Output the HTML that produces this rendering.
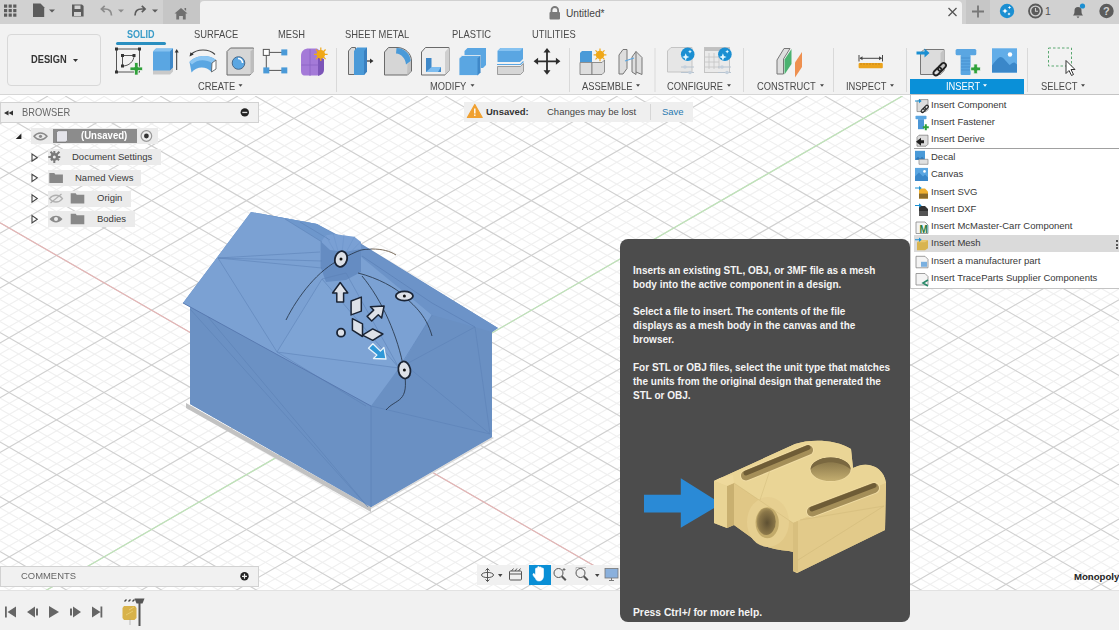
<!DOCTYPE html>
<html><head><meta charset="utf-8">
<style>
*{box-sizing:border-box;margin:0;padding:0}
html,body{width:1119px;height:630px;overflow:hidden;background:#fff;font-family:"Liberation Sans",sans-serif;color:#3c3c3c}
.a{position:absolute}
.t{position:absolute;white-space:nowrap;line-height:12px}
.grid{position:absolute;left:0;top:0}
#topbar{left:0;top:0;width:1119px;height:24px;background:#d1d1d1}
#hometab{left:163px;top:0;width:37px;height:24px;background:#c6c6c6}
#doctab{left:200px;top:1px;width:762px;height:23px;background:#f2f2f2;border-radius:4px 4px 0 0}
#plustab{left:966px;top:0;width:24px;height:24px;background:#c6c6c6}
#toolbar{left:0;top:24px;width:1119px;height:71px;background:#f2f2f2;border-bottom:1px solid #d6d6d6}
.tab{font-size:10.4px;color:#4a4a4a;top:29px;transform:scaleX(.9);transform-origin:0 50%}
.grp{font-size:10px;color:#4a4a4a;top:81px;transform:scaleX(.935);transform-origin:0 50%}
.sep{position:absolute;width:1px;background:#dcdcdc;top:48px;height:44px}
.panel{position:absolute;background:#f1f1f1;border:1px solid #d2d2d2}
.row{position:absolute;background:#ebebeb;height:16px}
.tree{font-size:9.5px;color:#383838}
.mi{position:absolute;left:931px;font-size:9.5px;color:#383838;white-space:nowrap;line-height:12px}
.tip{font-size:10px;font-weight:bold;color:#f4f4f4;left:633px;line-height:14px}
</style></head><body>
<svg class="grid" width="1119" height="630" viewBox="0 0 1119 630"><defs><filter id="gblur" x="0" y="0" width="1" height="1"><feGaussianBlur stdDeviation="0.45"/></filter></defs><g filter="url(#gblur)"><g stroke="#f0f0f0" stroke-width="1.2"><line x1="1090.7" y1="96.0" x2="1119.0" y2="112.4"/><line x1="1071.7" y1="96.0" x2="1119.0" y2="123.3"/><line x1="1052.7" y1="96.0" x2="1119.0" y2="134.3"/><line x1="1033.7" y1="96.0" x2="1119.0" y2="145.3"/><line x1="995.7" y1="96.0" x2="1119.0" y2="167.2"/><line x1="976.7" y1="96.0" x2="1119.0" y2="178.1"/><line x1="957.7" y1="96.0" x2="1119.0" y2="189.1"/><line x1="938.8" y1="96.0" x2="1119.0" y2="200.1"/><line x1="900.8" y1="96.0" x2="1119.0" y2="222.0"/><line x1="881.8" y1="96.0" x2="1119.0" y2="233.0"/><line x1="862.8" y1="96.0" x2="1119.0" y2="243.9"/><line x1="843.8" y1="96.0" x2="1119.0" y2="254.9"/><line x1="805.8" y1="96.0" x2="1119.0" y2="276.8"/><line x1="786.8" y1="96.0" x2="1119.0" y2="287.8"/><line x1="767.9" y1="96.0" x2="1119.0" y2="298.7"/><line x1="748.9" y1="96.0" x2="1119.0" y2="309.7"/><line x1="710.9" y1="96.0" x2="1119.0" y2="331.6"/><line x1="691.9" y1="96.0" x2="1119.0" y2="342.6"/><line x1="672.9" y1="96.0" x2="1119.0" y2="353.5"/><line x1="653.9" y1="96.0" x2="1119.0" y2="364.5"/><line x1="616.0" y1="96.0" x2="1119.0" y2="386.4"/><line x1="597.0" y1="96.0" x2="1119.0" y2="397.4"/><line x1="578.0" y1="96.0" x2="1119.0" y2="408.4"/><line x1="559.0" y1="96.0" x2="1119.0" y2="419.3"/><line x1="521.0" y1="96.0" x2="1119.0" y2="441.2"/><line x1="502.0" y1="96.0" x2="1119.0" y2="452.2"/><line x1="483.0" y1="96.0" x2="1119.0" y2="463.2"/><line x1="464.1" y1="96.0" x2="1119.0" y2="474.1"/><line x1="426.1" y1="96.0" x2="1119.0" y2="496.1"/><line x1="407.1" y1="96.0" x2="1119.0" y2="507.0"/><line x1="388.1" y1="96.0" x2="1119.0" y2="518.0"/><line x1="369.1" y1="96.0" x2="1119.0" y2="528.9"/><line x1="331.1" y1="96.0" x2="1119.0" y2="550.9"/><line x1="312.1" y1="96.0" x2="1119.0" y2="561.8"/><line x1="293.2" y1="96.0" x2="1119.0" y2="572.8"/><line x1="274.2" y1="96.0" x2="1119.0" y2="583.8"/><line x1="236.2" y1="96.0" x2="1093.6" y2="591.0"/><line x1="217.2" y1="96.0" x2="1074.6" y2="591.0"/><line x1="198.2" y1="96.0" x2="1055.6" y2="591.0"/><line x1="179.2" y1="96.0" x2="1036.6" y2="591.0"/><line x1="141.3" y1="96.0" x2="998.6" y2="591.0"/><line x1="122.3" y1="96.0" x2="979.6" y2="591.0"/><line x1="103.3" y1="96.0" x2="960.6" y2="591.0"/><line x1="84.3" y1="96.0" x2="941.7" y2="591.0"/><line x1="46.3" y1="96.0" x2="903.7" y2="591.0"/><line x1="27.3" y1="96.0" x2="884.7" y2="591.0"/><line x1="8.3" y1="96.0" x2="865.7" y2="591.0"/><line x1="0.0" y1="102.1" x2="846.7" y2="591.0"/><line x1="0.0" y1="124.1" x2="808.7" y2="591.0"/><line x1="0.0" y1="135.0" x2="789.8" y2="591.0"/><line x1="0.0" y1="146.0" x2="770.8" y2="591.0"/><line x1="0.0" y1="157.0" x2="751.8" y2="591.0"/><line x1="0.0" y1="178.9" x2="713.8" y2="591.0"/><line x1="0.0" y1="189.8" x2="694.8" y2="591.0"/><line x1="0.0" y1="200.8" x2="675.8" y2="591.0"/><line x1="0.0" y1="211.8" x2="656.8" y2="591.0"/><line x1="0.0" y1="233.7" x2="618.9" y2="591.0"/><line x1="0.0" y1="244.7" x2="599.9" y2="591.0"/><line x1="0.0" y1="255.6" x2="580.9" y2="591.0"/><line x1="0.0" y1="266.6" x2="561.9" y2="591.0"/><line x1="0.0" y1="288.5" x2="523.9" y2="591.0"/><line x1="0.0" y1="299.5" x2="504.9" y2="591.0"/><line x1="0.0" y1="310.4" x2="485.9" y2="591.0"/><line x1="0.0" y1="321.4" x2="467.0" y2="591.0"/><line x1="0.0" y1="343.3" x2="429.0" y2="591.0"/><line x1="0.0" y1="354.3" x2="410.0" y2="591.0"/><line x1="0.0" y1="365.3" x2="391.0" y2="591.0"/><line x1="0.0" y1="376.2" x2="372.0" y2="591.0"/><line x1="0.0" y1="398.1" x2="334.0" y2="591.0"/><line x1="0.0" y1="409.1" x2="315.1" y2="591.0"/><line x1="0.0" y1="420.1" x2="296.1" y2="591.0"/><line x1="0.0" y1="431.0" x2="277.1" y2="591.0"/><line x1="0.0" y1="453.0" x2="239.1" y2="591.0"/><line x1="0.0" y1="463.9" x2="220.1" y2="591.0"/><line x1="0.0" y1="474.9" x2="201.1" y2="591.0"/><line x1="0.0" y1="485.8" x2="182.1" y2="591.0"/><line x1="0.0" y1="507.8" x2="144.2" y2="591.0"/><line x1="0.0" y1="518.7" x2="125.2" y2="591.0"/><line x1="0.0" y1="529.7" x2="106.2" y2="591.0"/><line x1="0.0" y1="540.7" x2="87.2" y2="591.0"/><line x1="0.0" y1="562.6" x2="49.2" y2="591.0"/><line x1="0.0" y1="573.5" x2="30.2" y2="591.0"/><line x1="0.0" y1="584.5" x2="11.2" y2="591.0"/><line x1="0.0" y1="101.7" x2="9.9" y2="96.0"/><line x1="0.0" y1="112.7" x2="28.9" y2="96.0"/><line x1="0.0" y1="134.6" x2="66.9" y2="96.0"/><line x1="0.0" y1="145.6" x2="85.9" y2="96.0"/><line x1="0.0" y1="156.6" x2="104.9" y2="96.0"/><line x1="0.0" y1="167.5" x2="123.9" y2="96.0"/><line x1="0.0" y1="189.4" x2="161.8" y2="96.0"/><line x1="0.0" y1="200.4" x2="180.8" y2="96.0"/><line x1="0.0" y1="211.4" x2="199.8" y2="96.0"/><line x1="0.0" y1="222.3" x2="218.8" y2="96.0"/><line x1="0.0" y1="244.3" x2="256.8" y2="96.0"/><line x1="0.0" y1="255.2" x2="275.8" y2="96.0"/><line x1="0.0" y1="266.2" x2="294.8" y2="96.0"/><line x1="0.0" y1="277.1" x2="313.7" y2="96.0"/><line x1="0.0" y1="299.1" x2="351.7" y2="96.0"/><line x1="0.0" y1="310.0" x2="370.7" y2="96.0"/><line x1="0.0" y1="321.0" x2="389.7" y2="96.0"/><line x1="0.0" y1="332.0" x2="408.7" y2="96.0"/><line x1="0.0" y1="353.9" x2="446.7" y2="96.0"/><line x1="0.0" y1="364.8" x2="465.7" y2="96.0"/><line x1="0.0" y1="375.8" x2="484.6" y2="96.0"/><line x1="0.0" y1="386.8" x2="503.6" y2="96.0"/><line x1="0.0" y1="408.7" x2="541.6" y2="96.0"/><line x1="0.0" y1="419.7" x2="560.6" y2="96.0"/><line x1="0.0" y1="430.6" x2="579.6" y2="96.0"/><line x1="0.0" y1="441.6" x2="598.6" y2="96.0"/><line x1="0.0" y1="463.5" x2="636.5" y2="96.0"/><line x1="0.0" y1="474.5" x2="655.5" y2="96.0"/><line x1="0.0" y1="485.4" x2="674.5" y2="96.0"/><line x1="0.0" y1="496.4" x2="693.5" y2="96.0"/><line x1="0.0" y1="518.3" x2="731.5" y2="96.0"/><line x1="0.0" y1="529.3" x2="750.5" y2="96.0"/><line x1="0.0" y1="540.2" x2="769.5" y2="96.0"/><line x1="0.0" y1="551.2" x2="788.4" y2="96.0"/><line x1="0.0" y1="573.1" x2="826.4" y2="96.0"/><line x1="0.0" y1="584.1" x2="845.4" y2="96.0"/><line x1="7.0" y1="591.0" x2="864.4" y2="96.0"/><line x1="26.0" y1="591.0" x2="883.4" y2="96.0"/><line x1="64.0" y1="591.0" x2="921.4" y2="96.0"/><line x1="83.0" y1="591.0" x2="940.4" y2="96.0"/><line x1="102.0" y1="591.0" x2="959.3" y2="96.0"/><line x1="121.0" y1="591.0" x2="978.3" y2="96.0"/><line x1="158.9" y1="591.0" x2="1016.3" y2="96.0"/><line x1="177.9" y1="591.0" x2="1035.3" y2="96.0"/><line x1="196.9" y1="591.0" x2="1054.3" y2="96.0"/><line x1="215.9" y1="591.0" x2="1073.3" y2="96.0"/><line x1="253.9" y1="591.0" x2="1111.2" y2="96.0"/><line x1="272.9" y1="591.0" x2="1119.0" y2="102.5"/><line x1="291.9" y1="591.0" x2="1119.0" y2="113.4"/><line x1="310.8" y1="591.0" x2="1119.0" y2="124.4"/><line x1="348.8" y1="591.0" x2="1119.0" y2="146.3"/><line x1="367.8" y1="591.0" x2="1119.0" y2="157.3"/><line x1="386.8" y1="591.0" x2="1119.0" y2="168.3"/><line x1="405.8" y1="591.0" x2="1119.0" y2="179.2"/><line x1="443.8" y1="591.0" x2="1119.0" y2="201.1"/><line x1="462.7" y1="591.0" x2="1119.0" y2="212.1"/><line x1="481.7" y1="591.0" x2="1119.0" y2="223.1"/><line x1="500.7" y1="591.0" x2="1119.0" y2="234.0"/><line x1="538.7" y1="591.0" x2="1119.0" y2="256.0"/><line x1="557.7" y1="591.0" x2="1119.0" y2="266.9"/><line x1="576.7" y1="591.0" x2="1119.0" y2="277.9"/><line x1="595.7" y1="591.0" x2="1119.0" y2="288.9"/><line x1="633.6" y1="591.0" x2="1119.0" y2="310.8"/><line x1="652.6" y1="591.0" x2="1119.0" y2="321.7"/><line x1="671.6" y1="591.0" x2="1119.0" y2="332.7"/><line x1="690.6" y1="591.0" x2="1119.0" y2="343.7"/><line x1="728.6" y1="591.0" x2="1119.0" y2="365.6"/><line x1="747.6" y1="591.0" x2="1119.0" y2="376.6"/><line x1="766.6" y1="591.0" x2="1119.0" y2="387.5"/><line x1="785.5" y1="591.0" x2="1119.0" y2="398.5"/><line x1="823.5" y1="591.0" x2="1119.0" y2="420.4"/><line x1="842.5" y1="591.0" x2="1119.0" y2="431.4"/><line x1="861.5" y1="591.0" x2="1119.0" y2="442.3"/><line x1="880.5" y1="591.0" x2="1119.0" y2="453.3"/><line x1="918.5" y1="591.0" x2="1119.0" y2="475.2"/><line x1="937.4" y1="591.0" x2="1119.0" y2="486.2"/><line x1="956.4" y1="591.0" x2="1119.0" y2="497.1"/><line x1="975.4" y1="591.0" x2="1119.0" y2="508.1"/><line x1="1013.4" y1="591.0" x2="1119.0" y2="530.0"/><line x1="1032.4" y1="591.0" x2="1119.0" y2="541.0"/><line x1="1051.4" y1="591.0" x2="1119.0" y2="552.0"/><line x1="1070.4" y1="591.0" x2="1119.0" y2="562.9"/><line x1="1108.3" y1="591.0" x2="1119.0" y2="584.8"/></g><g stroke="#d0d0d0" stroke-width="1.15"><line x1="1109.6" y1="96.0" x2="1119.0" y2="101.4"/><line x1="1014.7" y1="96.0" x2="1119.0" y2="156.2"/><line x1="919.8" y1="96.0" x2="1119.0" y2="211.0"/><line x1="824.8" y1="96.0" x2="1119.0" y2="265.8"/><line x1="729.9" y1="96.0" x2="1119.0" y2="320.7"/><line x1="634.9" y1="96.0" x2="1119.0" y2="375.5"/><line x1="540.0" y1="96.0" x2="1119.0" y2="430.3"/><line x1="445.1" y1="96.0" x2="1119.0" y2="485.1"/><line x1="350.1" y1="96.0" x2="1119.0" y2="539.9"/><line x1="255.2" y1="96.0" x2="1112.6" y2="591.0"/><line x1="160.2" y1="96.0" x2="1017.6" y2="591.0"/><line x1="65.3" y1="96.0" x2="922.7" y2="591.0"/><line x1="0.0" y1="113.1" x2="827.7" y2="591.0"/><line x1="0.0" y1="167.9" x2="732.8" y2="591.0"/><line x1="0.0" y1="222.7" x2="637.9" y2="591.0"/><line x1="0.0" y1="277.6" x2="542.9" y2="591.0"/><line x1="0.0" y1="332.4" x2="448.0" y2="591.0"/><line x1="0.0" y1="387.2" x2="353.0" y2="591.0"/><line x1="0.0" y1="442.0" x2="258.1" y2="591.0"/><line x1="0.0" y1="496.8" x2="163.2" y2="591.0"/><line x1="0.0" y1="551.6" x2="68.2" y2="591.0"/><line x1="0.0" y1="123.7" x2="47.9" y2="96.0"/><line x1="0.0" y1="178.5" x2="142.9" y2="96.0"/><line x1="0.0" y1="233.3" x2="237.8" y2="96.0"/><line x1="0.0" y1="288.1" x2="332.7" y2="96.0"/><line x1="0.0" y1="342.9" x2="427.7" y2="96.0"/><line x1="0.0" y1="397.7" x2="522.6" y2="96.0"/><line x1="0.0" y1="452.5" x2="617.6" y2="96.0"/><line x1="0.0" y1="507.4" x2="712.5" y2="96.0"/><line x1="0.0" y1="562.2" x2="807.4" y2="96.0"/><line x1="45.0" y1="591.0" x2="902.4" y2="96.0"/><line x1="139.9" y1="591.0" x2="997.3" y2="96.0"/><line x1="234.9" y1="591.0" x2="1092.3" y2="96.0"/><line x1="329.8" y1="591.0" x2="1119.0" y2="135.4"/><line x1="424.8" y1="591.0" x2="1119.0" y2="190.2"/><line x1="519.7" y1="591.0" x2="1119.0" y2="245.0"/><line x1="614.6" y1="591.0" x2="1119.0" y2="299.8"/><line x1="709.6" y1="591.0" x2="1119.0" y2="354.6"/><line x1="804.5" y1="591.0" x2="1119.0" y2="409.4"/><line x1="899.5" y1="591.0" x2="1119.0" y2="464.3"/><line x1="994.4" y1="591.0" x2="1119.0" y2="519.1"/><line x1="1089.3" y1="591.0" x2="1119.0" y2="573.9"/></g><line x1="0.0" y1="222.7" x2="637.9" y2="591.0" stroke="#e6b4b4" stroke-width="1.15"/><line x1="45.0" y1="591.0" x2="902.4" y2="96.0" stroke="#bfe4b8" stroke-width="1.2"/></g></svg>
<svg class="a" style="left:170px;top:200px" width="340" height="320" viewBox="170 200 340 320">
<!-- shadow -->
<path d="M186 403l185 104 0 5-185-104z" fill="#c2c2c2"/><path d="M371 507l121-70 2 1-123 71z" fill="#d8d8d8"/>
<path d="M251 212L183 303L190 307L190 404L371 507L492 437L492 332L498 328L360 243L336 234L317 224Z" fill="#6a90c4"/>
<!-- left wall -->
<path d="M190 306L190 404L371 507L371 405Z" fill="#6b91c4"/>
<!-- right wall / gable -->
<path d="M371 405L371 507L492 437L492 331L432 315L404 361Z" fill="#6a90c3"/>
<!-- roof front -->
<path d="M251 212L183 303L371 406L404 361L432 315L360 252L322 242L317 224Z" fill="#7ba1d3"/>
<!-- ridge band right -->
<path d="M358 243L498 328L492 332L432 315L360 256Z" fill="#6c93c8"/>
<path d="M362 256L432 303L475 327" stroke="#5a80b6" stroke-width=".9" fill="none" opacity=".8"/>
<!-- back ridge -->
<path d="M251 212L317 224L334 234L322 242L285 219Z" fill="#6e97cc"/>
<!-- dome -->
<path d="M320.6 241.7L320.6 267L326 282L346 280L361 272L361 249L360.6 241.7Z" fill="#658cc2"/>
<path d="M321.1 241.7L325.6 235.6L333.3 233.9L354.4 236.7L360.6 241.7L361.1 248.9L345 252L330 250Z" fill="#7aa0d4"/>
<g stroke="#6a92c8" stroke-width=".6" opacity=".8"><path d="M341 262L325.6 235.6M341 262L333.3 233.9M341 262L344 234.5M341 262L354.4 236.7M341 262L360.6 241.7"/></g>
<!-- lighter central triangle -->
<path d="M277 352L322 279L399 368Z" fill="#7ea4d5"/>
<!-- mesh lines -->
<g stroke="#5a7fb5" stroke-width=".7" fill="none" opacity=".75">
<path d="M218 258L277 352L366 406"/>
<path d="M218 258L322 261M218 258L322 268M218 258L320 252"/>
<path d="M277 352L322 279L399 368L277 352"/>
<path d="M322 279L346 273L399 368"/>
<path d="M371 406L490 434M409 368L490 434M475 327L490 434"/>
<path d="M190 309L368 507M208 317L368 507"/>
<path d="M399 368L475 327M399 368L432 315"/>
<path d="M285 219L322 242M300 222L330 240"/>
<path d="M183 303L371 406" stroke="#5070a8" stroke-width="1"/>
<path d="M371 406V507" stroke="#5a80b5" stroke-width=".9"/>
</g>
<!-- arcs -->
<g stroke="#1e2a3a" stroke-width=".9" fill="none" opacity=".85">
<path d="M286 320C298 296 318 270 341 259S360 250 372 249"/>
<path d="M358 273C378 278 396 288 404 296S426 314 432 336"/>
<path d="M362 276C382 300 398 336 404 370S396 398 386 410"/>
</g>
<path d="M372 249C382 249 390 251 396 255" stroke="#6a5a48" stroke-width=".9" fill="none"/>
<!-- handles -->
<g stroke="#1a2435" stroke-width="1.8" fill="#dde1e8">
<ellipse cx="341" cy="259" rx="6" ry="8" transform="rotate(15 341 259)"/>
<ellipse cx="404.4" cy="296" rx="8.6" ry="4.6"/>
<ellipse cx="404.4" cy="370" rx="6" ry="8.6" transform="rotate(-10 404.4 370)"/>
<circle cx="341" cy="332.7" r="4"/>
</g>
<g fill="#111"><circle cx="341" cy="259" r="1.5"/><circle cx="404.4" cy="296" r="1.5"/><circle cx="404.4" cy="370" r="1.5"/></g>
<g stroke="#1a2435" stroke-width="1.5" fill="#dde1e8" stroke-linejoin="round">
<path d="M340.2 282.5l7.6 10.5h-4.2v9h-6.8v-9h-4.2z"/>
<path d="M351.1 301l10.2-3.9v14l-10.2 3.8z"/>
<path d="M352.4 318.7l10.1 5.1v12.7l-10.1-6.3z"/>
<path d="M362.5 335.2l10.2-6.3 10.2 5.1-10.2 6.3z"/>
<path d="M384.1 306l-2.5 12-3.3-3.3-6.6 6.3-4.6-4.6 6.6-6.3-3.3-3.3z"/>
</g>
<path d="M386 359l-12.5-.5 3.4-3.4-8.4-6.8 4.4-4.6 7.5 7.4 3.5-3.6z" fill="#2f98d8" stroke="#e8f4fc" stroke-width="1.3" stroke-linejoin="round"/>
</svg>

<!-- top bar -->
<div class="a" id="topbar"></div>
<div class="a" id="hometab"></div>
<div class="a" id="doctab"></div>
<div class="a" id="plustab"></div>

<svg class="a" style="left:0;top:0" width="1119" height="24" viewBox="0 0 1119 24">
<g fill="#5c5c5c">
<rect x="4" y="4.5" width="3.2" height="3.2"/><rect x="8.6" y="4.5" width="3.2" height="3.2"/><rect x="13.2" y="4.5" width="3.2" height="3.2"/>
<rect x="4" y="9" width="3.2" height="3.2"/><rect x="8.6" y="9" width="3.2" height="3.2"/><rect x="13.2" y="9" width="3.2" height="3.2"/>
<rect x="4" y="13.5" width="3.2" height="3.2"/><rect x="8.6" y="13.5" width="3.2" height="3.2"/><rect x="13.2" y="13.5" width="3.2" height="3.2"/>
<path d="M33 3.6h7.5l3.7 3.7v9.7H33z"/>
<path d="M49 9.5h6l-3 3z"/>
<path d="M72 4.5h10l1.6 1.6v10.4H72z M74.5 5.5v3.5h6v-3.5z M74 12v4h7v-4z" fill-rule="evenodd"/>
<path d="M152 9.5h6l-3 3z"/>
<path d="M135 15.5c0-4 2.5-6.5 6.5-6.5h3.5M141.8 5.8l3.3 3.2-3.3 3.2" fill="none" stroke="#5c5c5c" stroke-width="1.7"/>
<path d="M181 8l6.5 5.5h-1.8v6h-2.8v-3.5h-3.8v3.5h-2.8v-6h-1.8z M184.5 9.5v-1.5h1.6v3z" fill="#707070"/>
<rect x="549.5" y="12" width="10.5" height="7.5" rx="1" fill="#7a7a7a"/>
<path d="M551.5 12.5v-2.2a3.3 3.3 0 0 1 6.6 0v2.2" fill="none" stroke="#7a7a7a" stroke-width="1.8"/>
<path d="M948.5 8l8 8M956.5 8l-8 8" stroke="#555" stroke-width="1.3" fill="none"/>
<path d="M978 5.5v12M972 11.5h12" stroke="#777" stroke-width="1.8" fill="none"/>
<circle cx="1007" cy="11" r="7.2" fill="#1b8fd2"/>
<path d="M1005 8.5l1 1.8 1.8.7-1.8.7-1 1.8-1-1.8-1.8-.7 1.8-.7z M1009.5 6l.6 1.1 1.1.4-1.1.4-.6 1.1-.6-1.1-1.1-.4 1.1-.4z M1009 12.5l.6 1 1 .5-1 .5-.6 1-.6-1-1-.5 1-.5z" fill="#fff"/>
<circle cx="1035.5" cy="11" r="6.5" fill="none" stroke="#5a5a5a" stroke-width="1.8"/>
<circle cx="1035.5" cy="11" r="4.2" fill="#5a5a5a"/>
<path d="M1035.5 8v3.3h2.5" stroke="#d1d1d1" stroke-width="1.1" fill="none"/>
<path d="M1073 15.5c1.5-1.5 1.5-3 1.5-5a3.5 3.5 0 0 1 7 0c0 2 0 3.5 1.5 5z M1076.5 16.5h3l-1.5 1.7z"/>
<circle cx="1082.5" cy="6" r="2.6" fill="#1b8fd2"/>
<circle cx="1106.5" cy="11" r="7.2"/>
</g>
<path d="M111.5 15.5c0-4-2.5-6.5-6.5-6.5h-3.5M104.7 5.8l-3.3 3.2 3.3 3.2" fill="none" stroke="#8c8c8c" stroke-width="1.7"/>
<path d="M118 9.5h6l-3 3z" fill="#8c8c8c"/>
<text x="1045" y="15" font-size="10.5" fill="#555" font-family="Liberation Sans">1</text>
<text x="1103" y="15.2" font-size="11" font-weight="bold" fill="#d1d1d1" font-family="Liberation Sans">?</text>
</svg>
<div class="t" style="left:566px;top:8px;font-size:10.2px;color:#444">Untitled*</div>
<!-- toolbar -->
<div class="a" id="toolbar"></div>
<div class="a" style="left:7px;top:34px;width:94px;height:52px;border:1px solid #d8d8d8;border-radius:4px;background:#f2f2f2"></div>
<div class="t" style="left:31px;top:54px;font-size:10px;font-weight:bold;color:#333;transform:scaleX(.93);transform-origin:0 50%">DESIGN</div>
<svg class="a" style="left:0;top:24px" width="1119" height="71" viewBox="0 24 1119 71">
<defs>
<linearGradient id="gb" x1="0" y1="0" x2="0" y2="1"><stop offset="0" stop-color="#6bb4ec"/><stop offset="1" stop-color="#4a97d8"/></linearGradient>
</defs>
<!-- DESIGN arrow -->
<path d="M73 59h5l-2.5 3z" fill="#333"/>
<!-- sketch -->
<g fill="none" stroke="#555" stroke-width="1">
<rect x="116.5" y="49" width="23" height="23"/>
<path d="M122.5 55.5h11.5M122.5 55.5v10.5M134 55.5c0 6-5 10.5-11.5 10.5"/>
</g>
<g fill="#333"><rect x="115" y="47.5" width="3" height="3"/><rect x="138" y="47.5" width="3" height="3"/><rect x="115" y="70.5" width="3" height="3"/>
<rect x="121" y="54" width="3" height="3"/><rect x="132.5" y="54" width="3" height="3"/><rect x="121" y="64.5" width="3" height="3"/></g>
<path d="M134.5 62.5h3.6v4.5h4.5v3.6h-4.5v4.5h-3.6v-4.5H130v-3.6h4.5z" fill="#2fa13a" stroke="#f2f2f2" stroke-width=".8"/>
<!-- extrude -->
<path d="M153 51.5l3-3h17v19.5l-3 3H153z" fill="#5aa6e2"/>
<path d="M153 51.5l3-3h17l-3 3z" fill="#86c2f0"/>
<path d="M170 51.5l3-3v19.5l-3 3z" fill="#3f88c8"/>
<path d="M153 70.5h17l3-3v4l-3 3H153z" fill="#c9c9c9"/>
<path d="M176.7 70V50.5" stroke="#333" stroke-width="1"/>
<path d="M174.7 52.5l2-3.5 2 3.5z" fill="#333"/>
<!-- revolve -->
<path d="M191 54.5c6-6 18-6 24 0" fill="none" stroke="#444" stroke-width="1.1"/>
<path d="M189.5 56.5l1-4.2 3.2 2.2z" fill="#333"/>
<path d="M189.5 62C196 55 209 54 216 60L216 69L211.5 72C206 66 197 66 191.5 72.5Z" fill="#5aa6e2"/>
<path d="M189.5 62C196 55 209 54 216 60L212 63C206 59 197 59 192 64.5Z" fill="#8cc6f2"/>
<path d="M212 63L216 60V69L211.5 72Z" fill="#fff" stroke="#555" stroke-width=".8"/>
<!-- hole -->
<path d="M227 51.5l3.5-3.5h23v23.5l-3.5 3.5H227z" fill="#d6d6d6" stroke="#6a6a6a" stroke-width="1"/>
<path d="M250.5 51.5l3.5-3.5v23.5l-3.5 3.5z" fill="#bdbdbd"/>
<circle cx="238.5" cy="63" r="6.3" fill="#5aa6e2" stroke="#4a6a8a" stroke-width="1"/>
<path d="M238 58.5a4.5 4.5 0 0 1 4.6 4.4" stroke="#fff" stroke-width="1.6" fill="none"/>
<!-- pattern -->
<path d="M266.3 52.4h18M266.3 52.4v18M266.3 70.4h18" stroke="#555" stroke-width="1"/>
<rect x="263.3" y="49.4" width="6" height="6" fill="#fff" stroke="#555" stroke-width="1"/>
<rect x="281.3" y="49.4" width="6" height="6" fill="#4a9ad8"/>
<rect x="263.3" y="67.4" width="6" height="6" fill="#4a9ad8"/>
<rect x="281.3" y="67.4" width="6" height="6" fill="#4a9ad8"/>
<!-- form -->
<path d="M301 56c0-5 3-7.5 8-7.5h8l5 4v17c0 4-3 6-6 6h-11c-3 0-4-2-4-5z" fill="#a47ad8"/>
<path d="M318 56l6 3v11c0 3-2 5-6 6z" fill="#7c55b8"/>
<path d="M301.5 65h17M310 49v27" stroke="#8a62c4" stroke-width=".8"/>
<circle cx="320.8" cy="54.3" r="4.3" fill="#f0a818"/>
<g stroke="#f0a818" stroke-width="1.2"><path d="M320.8 47.5v13.6M314 54.3h13.6M316 49.5l9.6 9.6M325.6 49.5l-9.6 9.6"/></g>
<!-- separators -->
<g fill="#d9d9d9"><rect x="336" y="48" width="1" height="44"/><rect x="569" y="48" width="1" height="44"/><rect x="654.5" y="48" width="1" height="44"/><rect x="743" y="48" width="1" height="44"/><rect x="833" y="48" width="1" height="44"/><rect x="906" y="48" width="1" height="44"/><rect x="1027" y="48" width="1" height="44"/></g>
<!-- press pull -->
<path d="M348.5 51l3-3.5h4v27h-7z" fill="#dcdcdc" stroke="#6a6a6a" stroke-width="1"/>
<path d="M354 51l3-3.5h10v24l-3 3.5H354z" fill="#4a9ad8"/>
<path d="M364 51l3-3.5v24l-3 3.5z" fill="#3a80c0"/>
<path d="M367 61h3.5" stroke="#333" stroke-width="1.2"/><path d="M370 58.5l3.5 2.5-3.5 2.5z" fill="#333"/>
<!-- fillet -->
<path d="M384.5 52l4-4.5h8.5c8 0 14.5 6 14.5 13.5v10l-4 4h-23z" fill="#d6d6d6" stroke="#6a6a6a" stroke-width="1"/>
<path d="M407.5 64l3.5-3v10l-4 4z" fill="#c2c2c2"/>
<path d="M396.5 48c8 0 14 6 14.2 13l-4.7 3.5c-.5-6-4.5-10.5-10-11z" fill="#4a9ad8"/>
<!-- shell -->
<path d="M421.5 52l4-4.5h23.5v23l-4 4.5h-23.5z" fill="#eeeeee" stroke="#6a6a6a" stroke-width="1"/>
<path d="M445 52l4-4.5v23l-4 4.5z" fill="#cfcfcf"/>
<path d="M426 58h5.5v9h9.5v5H426z" fill="#3f88c8"/><path d="M431.5 67h9.5l-3 5H426z" fill="#7dbdf0"/>
<!-- combine -->
<path d="M464.5 51l3-3h18.5v17l-3 3h-18.5z" fill="#5aa6e2"/>
<path d="M459 58.5l3-3h18.5v17l-3 3H459z" fill="#5aa6e2" stroke="#f2f2f2" stroke-width=".8"/>
<path d="M477.5 58.5l3-3v17l-3 3z" fill="#3f88c8"/>
<!-- split -->
<path d="M497.5 51l3-3h22.5v11l-3 3h-22.5z" fill="#5aa6e2"/>
<path d="M497.5 51l3-3h22.5l-3 3z" fill="#86c2f0"/>
<path d="M497 64.5h23.5l3-3" stroke="#5aa6e2" stroke-width="1.2" fill="none"/>
<path d="M497.5 66.5h23l3-3v8l-3 3h-23z" fill="#d6d6d6" stroke="#8a8a8a" stroke-width=".8"/>
<!-- move -->
<g stroke="#2d2d2d" stroke-width="1.8"><path d="M547 51v21M536.5 61.3h21"/></g>
<g fill="#2d2d2d"><path d="M547 47.9l3.5 4.5h-7z M547 74.7l3.5-4.5h-7z M533.6 61.3l4.5-3.5v7z M560.4 61.3l-4.5-3.5v7z"/></g>
<!-- new component -->
<path d="M580 53l2-2h10v11h-12z" fill="#4a9ad8"/>
<path d="M580 62.5h12v12h-12z" fill="#dedede" stroke="#777" stroke-width=".8"/>
<path d="M592 62.5h10l2.5-2.5v12l-2.5 2.5h-10z" fill="#dedede" stroke="#777" stroke-width=".8"/>
<circle cx="600" cy="54.9" r="4.2" fill="#f0a818"/>
<g stroke="#f0a818" stroke-width="1.2"><path d="M600 48.5v12.8M593.6 54.9h12.8M595.5 50.4l9 9M604.5 50.4l-9 9"/></g>
<!-- joint -->
<path d="M619 55l4-5.5h4v19l-4 5.5h-4z" fill="#dedede" stroke="#777" stroke-width="1"/>
<path d="M632 57l4-5.5v23l-4-2.5z M636 51.5l6 6v17l-6-2.5" fill="#dedede" stroke="#777" stroke-width="1"/>
<path d="M625 61l9-3" stroke="#5aa6e2" stroke-width="1.2"/>
<!-- configure 1 -->
<path d="M667.5 51l3.5-3.5h21v24.5h-24.5z" fill="#e6e6e6" stroke="#c4c4c4" stroke-width="1"/>
<path d="M681 67h13M681 72.5h13" stroke="#b8c4d0" stroke-width="1.2"/><circle cx="685" cy="67" r="1.8" fill="#c4d0dc"/><circle cx="690" cy="72.5" r="1.8" fill="#c4d0dc"/>
<circle cx="687.7" cy="54.3" r="6.8" fill="#1b8fd2"/>
<path d="M685.7 53.3l1.1 2.6 2.6 1.1-2.6 1.1-1.1 2.6-1.1-2.6-2.6-1.1 2.6-1.1z M690 49.8l.6 1.3 1.3.6-1.3.6-.6 1.3-.6-1.3-1.3-.6 1.3-.6z" fill="#e0f6ff"/>
<!-- configure 2 -->
<rect x="704.5" y="47.5" width="25" height="25" fill="#eaeaea" stroke="#c4c4c4" stroke-width="1"/>
<rect x="704.5" y="47.5" width="25" height="3.5" fill="#c0c0c0"/>
<path d="M709 53v16M714 53v16M719 53v16M705 57h14M705 62h14M705 67h14" stroke="#c4c4c4" stroke-width=".8"/>
<path d="M718 67h13M718 72.5h13" stroke="#b8c4d0" stroke-width="1.2"/><circle cx="722" cy="67" r="1.8" fill="#c4d0dc"/><circle cx="727" cy="72.5" r="1.8" fill="#c4d0dc"/>
<circle cx="724.9" cy="54.3" r="6.8" fill="#1b8fd2"/>
<path d="M722.9 53.3l1.1 2.6 2.6 1.1-2.6 1.1-1.1 2.6-1.1-2.6-2.6-1.1 2.6-1.1z M727.2 49.8l.6 1.3 1.3.6-1.3.6-.6 1.3-.6-1.3-1.3-.6 1.3-.6z" fill="#e0f6ff"/>
<!-- construct -->
<path d="M777 60l7-11.5h6l-6.5 10.5v15h-6.5z" fill="#dedede" stroke="#777" stroke-width="1"/>
<path d="M784.5 59.5l7-10.5v15l-7 10.5z" fill="#4bb270"/>
<path d="M795 62.5l7-10.5v15l-7 10.5z" fill="#ee9050"/>
<!-- inspect -->
<path d="M859 55v6.5M882.5 55v6.5M860 58.3h21.5" stroke="#444" stroke-width="1"/>
<path d="M859.5 58.3l3-2v4z M882 58.3l-3-2v4z" fill="#444"/>
<rect x="858.6" y="63" width="24.2" height="5.3" rx="1" fill="#eba31c"/>
<path d="M861 63v2M864 63v2M867 63v2M870 63v2M873 63v2M876 63v2M879 63v2" stroke="#b87a10" stroke-width=".6"/>
<!-- insert derive -->
<path d="M920.5 53l3.5-3.5h20v21.5l-3.5 3.5h-20z" fill="#dcdcdc" stroke="#777" stroke-width="1"/>
<path d="M940.5 53l3.5-3.5v21.5l-3.5 3.5z" fill="#c4c4c4"/>
<path d="M916.5 51.5h8v-3l5 4.5-5 4.5v-3h-8z" fill="#1b8fd2"/>
<g fill="none" stroke="#222" stroke-width="1.8"><path d="M934 71.5l3.5-3.5a2.5 2.5 0 0 1 3.5 3.5l-3.5 3.5a2.5 2.5 0 0 1-3.5-3.5z"/><path d="M938.5 67l3.5-3.5a2.5 2.5 0 0 1 3.5 3.5l-3.5 3.5a2.5 2.5 0 0 1-3.5-3.5z"/></g>
<!-- fastener -->
<rect x="955.6" y="49" width="20.7" height="6.3" rx="1.5" fill="#5aa6e2"/>
<rect x="960.6" y="55" width="10" height="20" rx="1" fill="#5aa6e2"/>
<path d="M961 58h9M961 61h9M961 64h9M961 67h9M961 70h9" stroke="#3f88c8" stroke-width=".7"/>
<path d="M973.8 64h3.6v3.1h3.1v3.6h-3.1v3.1h-3.6v-3.1h-3.1v-3.6h3.1z" fill="#2fa13a" stroke="#f2f2f2" stroke-width=".8"/>
<!-- canvas -->
<rect x="992" y="48.3" width="25" height="24.3" fill="#62ade8"/>
<path d="M992 72.6v-7c3-4 6-8 8.5-8.5 3 0 6 5 9 8 2-1.5 4-3 5-2.5l2.5 2v8z" fill="#3a87c9"/>
<circle cx="1010" cy="54.5" r="2.2" fill="#fff"/>
<!-- select -->
<rect x="1048.5" y="48" width="23" height="18" fill="none" stroke="#5aa870" stroke-width="1" stroke-dasharray="2.5 2"/>
<path d="M1066 60.5v13l3-3 2.5 5 2-1-2.5-5h4z" fill="#fff" stroke="#333" stroke-width="1"/>
</svg>

<div class="t tab" style="left:127px;color:#3a9cc8;font-weight:bold;transform:scaleX(.87)">SOLID</div>
<div class="a" style="left:116px;top:42px;width:50px;height:3px;background:#2a8fc0;border-radius:2px"></div>
<div class="t tab" style="left:193.6px">SURFACE</div>
<div class="t tab" style="left:278.2px">MESH</div>
<div class="t tab" style="left:345.3px">SHEET METAL</div>
<div class="t tab" style="left:451.7px">PLASTIC</div>
<div class="t tab" style="left:532.1px">UTILITIES</div>
<div class="t grp" style="left:197.9px">CREATE</div>
<div class="t grp" style="left:429.7px">MODIFY</div>
<div class="t grp" style="left:582.4px">ASSEMBLE</div>
<div class="t grp" style="left:666.8px">CONFIGURE</div>
<div class="t grp" style="left:756.6px">CONSTRUCT</div>
<div class="t grp" style="left:846.2px">INSPECT</div>
<div class="a" style="left:910px;top:79px;width:114px;height:15px;background:#0a90d8"></div>
<div class="t grp" style="left:945.7px;color:#fff">INSERT</div>
<div class="t grp" style="left:1040.6px">SELECT</div>
<svg class="a" style="left:0;top:80px" width="1119" height="10" viewBox="0 80 1119 10"><g fill="#444">
<path d="M238.5 84.3h4l-2 2.5z"/><path d="M470.5 84.3h4l-2 2.5z"/><path d="M636 84.3h4l-2 2.5z"/><path d="M727 84.3h4l-2 2.5z"/><path d="M820 84.3h4l-2 2.5z"/><path d="M890 84.3h4l-2 2.5z"/><path d="M983 84.3h4l-2 2.5z" fill="#fff"/><path d="M1081 84.3h4l-2 2.5z"/>
</g></svg>

<!-- browser -->
<div class="panel" style="left:0;top:102px;width:259px;height:21px"></div>
<div class="t" style="left:21.8px;top:107px;font-size:10.3px;color:#666;transform:scaleX(.905);transform-origin:0 50%">BROWSER</div>
<div class="row" style="left:31px;top:128px;width:127px;height:16px"></div>
<div class="a" style="left:53px;top:129px;width:84px;height:14px;background:#8c8c8c"></div>
<div class="t tree" style="left:81.4px;top:130px;color:#fff;font-weight:bold;font-size:10.4px;transform:scaleX(.92);transform-origin:0 50%">(Unsaved)</div>
<div class="row" style="left:48px;top:149px;width:113px"></div>
<div class="t tree" style="left:72px;top:151px">Document Settings</div>
<div class="row" style="left:48px;top:170px;width:93px"></div>
<div class="t tree" style="left:75px;top:172px">Named Views</div>
<div class="row" style="left:48px;top:191px;width:83px"></div>
<div class="t tree" style="left:97px;top:192px">Origin</div>
<div class="row" style="left:48px;top:211px;width:87px"></div>
<div class="t tree" style="left:97px;top:213px">Bodies</div>
<svg class="a" style="left:0;top:100px" width="260" height="130" viewBox="0 100 260 130">
<path d="M4 113l4.5-2.5v5z M8.5 113l4.5-2.5v5z" fill="#333"/>
<circle cx="244.8" cy="112.4" r="4.2" fill="#222"/><rect x="242.3" y="111.8" width="5" height="1.3" fill="#ddd"/>
<path d="M15.7 138.9l5.7-5.3v5.3z" fill="#222"/>
<path d="M34 136.3c3.5-4.5 9.5-4.5 13 0-3.5 4.5-9.5 4.5-13 0z" fill="none" stroke="#8a8a8a" stroke-width="1.4"/><circle cx="40.5" cy="136.3" r="1.6" fill="#8a8a8a"/>
<path d="M56.5 132.5l1.5-1.8h9.5v9.5l-1.5 1.8h-9.5z" fill="#e4e4ea" stroke="#666" stroke-width=".6"/>
<circle cx="146.4" cy="136" r="5.3" fill="#eee" stroke="#999" stroke-width="1.2"/><circle cx="146.4" cy="136" r="2.4" fill="#333"/>
<g fill="none" stroke="#444" stroke-width="1.1">
<path d="M32 154v7.3l5.3-3.65z"/><path d="M32 174.2v7.3l5.3-3.65z"/><path d="M32 194.9v7.3l5.3-3.65z"/><path d="M32 215.6v7.3l5.3-3.65z"/>
</g>
<g fill="#7a7a7a">
<circle cx="54.3" cy="156.9" r="3.8"/>
<path d="M53.3 150.9h2v12h-2z M48.3 155.9h12v2h-12z" />
<path d="M49.8 152.4l1.4-1.4 8.5 8.5-1.4 1.4z M58.7 151l1.4 1.4-8.5 8.5-1.4-1.4z"/>
</g>
<circle cx="54.3" cy="156.9" r="1.5" fill="#ebebeb"/>
<g fill="#888">
<path d="M49.3 173h5l1 1.5h7.6v8.4H49.3z"/>
<path d="M70.7 193.2h5l1 1.5h7.6v8.9H70.7z"/>
<path d="M70.7 213.8h5l1 1.5h7.6v8.9H70.7z"/>
</g>
<path d="M49.5 198.6c3.5-4.5 9.5-4.5 13 0-3.5 4.5-9.5 4.5-13 0z" fill="none" stroke="#b0b0b0" stroke-width="1.3"/><path d="M50.5 203l11-9" stroke="#b0b0b0" stroke-width="1.2"/>
<path d="M49.5 219c3.5-4.5 9.5-4.5 13 0-3.5 4.5-9.5 4.5-13 0z" fill="#8a8a8a"/><circle cx="56" cy="219" r="2" fill="#ececec"/>
</svg>

<!-- unsaved banner -->
<div class="a" style="left:464px;top:102px;width:229px;height:20px;background:#efefef"></div>
<div class="t" style="left:486px;top:106px;font-size:9.5px;font-weight:bold;color:#333">Unsaved:</div>
<div class="t" style="left:547px;top:106px;font-size:9.5px;color:#444">Changes may be lost</div>
<div class="a" style="left:650px;top:104px;width:1px;height:16px;background:#d6d6d6"></div>
<div class="t" style="left:662px;top:106px;font-size:9.5px;color:#2a7ab0">Save</div>

<!-- insert menu -->
<div class="a" style="left:910px;top:94px;width:212px;height:195px;background:#fff;border:1px solid #c4c4c4"></div>
<div class="a" style="left:914px;top:148px;width:205px;height:1px;background:#a0a0a0"></div>
<div class="a" style="left:914px;top:235px;width:205px;height:17px;background:#dadada"></div>
<div class="a" style="left:1116px;top:240px;width:2px;height:2px;background:#555"></div><div class="a" style="left:1116px;top:243.5px;width:2px;height:2px;background:#555"></div><div class="a" style="left:1116px;top:247px;width:2px;height:2px;background:#555"></div>
<div class="mi" style="top:99px">Insert Component</div>
<div class="mi" style="top:116px">Insert Fastener</div>
<div class="mi" style="top:133px">Insert Derive</div>
<div class="mi" style="top:151px">Decal</div>
<div class="mi" style="top:168px">Canvas</div>
<div class="mi" style="top:186px">Insert SVG</div>
<div class="mi" style="top:203px">Insert DXF</div>
<div class="mi" style="top:220px">Insert McMaster-Carr Component</div>
<div class="mi" style="top:237px">Insert Mesh</div>
<div class="mi" style="top:255px">Insert a manufacturer part</div>
<div class="mi" style="top:272px">Insert TraceParts Supplier Components</div>
<svg class="a" style="left:0;top:0" width="1119" height="300" viewBox="0 0 1119 300"><g transform="translate(915 97.6)"><path d="M2 4l2-2h9v10l-2 2H2z" fill="#ddd" stroke="#777" stroke-width=".7"/><path d="M0 3h4V1.3l2.7 2.2L4 5.7V4H0z" fill="#1b8fd2"/><path d="M6.5 12.5l2-2a1.4 1.4 0 0 1 2 2l-2 2a1.4 1.4 0 0 1-2-2zM9 10l2-2a1.4 1.4 0 0 1 2 2l-2 2a1.4 1.4 0 0 1-2-2z" fill="none" stroke="#222" stroke-width="1.1"/></g>
<g transform="translate(915 114.7)"><rect x="0.5" y="1" width="11" height="3.5" rx=".8" fill="#5aa6e2"/><rect x="3" y="4.5" width="6" height="10" fill="#4a96d6"/><path d="M9.8 9.5h2v2h2v2h-2v2h-2v-2h-2v-2h2z" fill="#2fa13a"/></g>
<g transform="translate(915 132.2)"><path d="M2 5l2-2h9v9l-2 2H2z" fill="#ddd" stroke="#777" stroke-width=".7"/><path d="M1 9.5l5-4v2.5h3v3H6v2.5z" fill="#222"/></g>
<g transform="translate(915 150.3)"><rect x="0" y="0.5" width="10" height="9" fill="#4a9ad8"/><path d="M0 9.5l3-3 2 2 2-2 3 3z" fill="#2f78b8"/><path d="M4 9h9v5H4z" fill="#e0e0e0" stroke="#888" stroke-width=".7"/></g>
<g transform="translate(915 167.4)"><rect x="0" y="0.5" width="13" height="13" fill="#5aa6e2"/><path d="M0 13.5V9l4-4 4 4 2-2 3 3v3.5z" fill="#3a87c9"/><circle cx="9.5" cy="4" r="1.3" fill="#fff"/></g>
<g transform="translate(915 184.6)"><path d="M4 4h6l3 3v7H4z" fill="#f0b030"/><rect x="4" y="9" width="9" height="5" fill="#8a6a2a"/><path d="M0 3h4V1.3l2.7 2.2L4 5.7V4H0z" fill="#1b8fd2"/></g>
<g transform="translate(915 202.0)"><path d="M4 4h6l3 3v7H4z" fill="#333"/><rect x="4" y="9" width="9" height="5" fill="#555"/><path d="M0 3h4V1.3l2.7 2.2L4 5.7V4H0z" fill="#1b8fd2"/></g>
<g transform="translate(915 219.5)"><path d="M1 2.5h9l3 3V14H1z" fill="#f4f4f4" stroke="#888" stroke-width=".8"/><text x="4.5" y="13.5" font-size="10" font-weight="bold" fill="#2a7a3a" font-family="Liberation Sans">M</text></g>
<g transform="translate(915 236.3)"><path d="M2 6l3-2h8v8l-3 2H2z" fill="#d8b450"/><path d="M2 6l3-2h8l-3 2z" fill="#e8c870"/><path d="M0 3h4V1.3l2.7 2.2L4 5.7V4H0z" fill="#1b8fd2"/></g>
<g transform="translate(915 253.8)"><path d="M1 2.5h9l3 3V14H1z" fill="#f4f4f4" stroke="#888" stroke-width=".8"/><rect x="6" y="8" width="6" height="5" fill="#7ab0e0"/></g>
<g transform="translate(915 271.0)"><path d="M1 2.5h9l3 3V14H1z" fill="#f4f4f4" stroke="#888" stroke-width=".8"/><path d="M13 9l-5 3 5 3" fill="none" stroke="#2a8a6a" stroke-width="1.6"/></g>
</svg>
<!-- comments -->
<div class="panel" style="left:0;top:566px;width:259px;height:21px"></div>
<div class="t" style="left:21.4px;top:570px;font-size:9.8px;color:#666;transform:scaleX(.963);transform-origin:0 50%">COMMENTS</div>
<div class="t" style="left:1074px;top:571px;font-size:9.6px;font-weight:bold;color:#222">Monopoly</div>

<!-- nav bar -->
<div class="a" style="left:477px;top:565px;width:145px;height:20px;background:#f0f0f0"></div>
<div class="a" style="left:529px;top:565px;width:22px;height:20px;background:#0a8fd6"></div>
<!-- timeline -->
<div class="a" style="left:0;top:590px;width:1119px;height:40px;background:#f1f1f1;border-top:1px solid #e2e2e2"></div>
<svg class="a" style="left:0;top:90px" width="1119" height="540" viewBox="0 90 1119 540">
<!-- warning -->
<path d="M474.8 104.5l7.4 13h-14.8z" fill="#f0a030" stroke="#f0a030" stroke-width="1.2" stroke-linejoin="round"/>
<rect x="474.1" y="108.5" width="1.4" height="5" fill="#fff"/><rect x="474.1" y="114.5" width="1.4" height="1.4" fill="#fff"/>
<!-- comments plus -->
<circle cx="244.5" cy="576.3" r="4.2" fill="#222"/><path d="M242 576.3h5M244.5 573.8v5" stroke="#eee" stroke-width="1.2"/>
<!-- nav icons -->
<g fill="none" stroke="#555" stroke-width="1">
<ellipse cx="487.5" cy="575" rx="6" ry="2.6"/>
<path d="M487.5 568.5v13M485.5 570.5l2-2 2 2M485.5 579.5l2 2 2-2"/>
<rect x="509.5" y="571" width="12" height="9" rx="1"/>
<path d="M510 574h11"/>
<circle cx="558.5" cy="573" r="4.5"/><path d="M561.8 576.3l4 4" stroke-width="2"/>
<circle cx="580.5" cy="573" r="4.5"/><path d="M583.8 576.3l4 4" stroke-width="2"/>
</g>
<path d="M564 568v3M562.5 569.5h3" stroke="#555" stroke-width=".8"/>
<path d="M576 567.5h10M576 567.5v3" stroke="#aaa" stroke-width=".7" fill="none"/>
<path d="M511.5 571l2-2.5M515 571l2-2.5M518.5 571l2-2.5" stroke="#555" stroke-width="1"/>
<g fill="#444"><path d="M498 574h4.5l-2.25 3z"/><path d="M595 574h4.5l-2.25 3z"/></g>
<path d="M535.5 578.5c-1.5-2-3-3.5-2.5-4.5s1.5 0 2.5 1v-6a1 1 0 0 1 2 0v4.5-6a1 1 0 0 1 2 0v6-5.5a1 1 0 0 1 2 0v5.5-4.5a1 1 0 0 1 2 0v7c0 3-2 5-4.5 5s-3-1.5-3.5-2.5z" fill="#fff" stroke="#fff" stroke-width=".6"/>
<rect x="605" y="568.5" width="13" height="9.5" fill="#8ab0dc" stroke="#777" stroke-width=".8"/><path d="M609 580.5h5M611.5 578v2.5" stroke="#777" stroke-width="1"/>
<!-- timeline controls -->
<g fill="#666">
<path d="M5 606.5h1.8v11H5z M16 606.5v11l-8.5-5.5z"/>
<path d="M27 612l8-5.5v11z M36 608.5h2v7h-2z"/>
<path d="M49 606v12l10-6z"/>
<path d="M70 608.5h2v7h-2z M73 606.5l8 5.5-8 5.5z"/>
<path d="M92 606.5l8.5 5.5-8.5 5.5z M100.5 606.5h1.8v11h-1.8z"/>
</g>
<path d="M124 606h11l1.5 2v10l-2 2h-10.5l-1.5-2v-10z" fill="#d8b24a"/>
<path d="M129 610l5-3M126 615l7-4" stroke="#e8cc70" stroke-width="1" fill="none"/>
<path d="M124.5 601.5l2-2M128.5 601.5l2-2M132.5 601.5l2-2" stroke="#444" stroke-width="1.4"/>
<path d="M134.5 598.5h10l-2 5h-6z" fill="#555"/><rect x="138.5" y="602" width="2" height="24" fill="#555"/>
<path d="M130 619v6" stroke="#999" stroke-width=".6"/>
</svg>

<!-- tooltip -->
<div class="a" style="left:620px;top:239px;width:290px;height:383px;background:#4c4c4c;border-radius:8px"></div>
<div class="t tip" style="top:264px">Inserts an existing STL, OBJ, or 3MF file as a mesh<br>body into the active component in a design.</div>
<div class="t tip" style="top:305px">Select a file to insert. The contents of the file<br>displays as a mesh body in the canvas and the<br>browser.</div>
<div class="t tip" style="top:361px">For STL or OBJ files, select the unit type that matches<br>the units from the original design that generated the<br>STL or OBJ.</div>
<svg class="a" style="left:630px;top:430px" width="270" height="160" viewBox="630 430 270 160">
<defs>
<radialGradient id="hole1" cx=".55" cy=".55" r=".6"><stop offset="0" stop-color="#5e5032"/><stop offset=".7" stop-color="#8a7648"/><stop offset="1" stop-color="#b09a60"/></radialGradient>
<linearGradient id="hole2" x1="0" y1="0" x2="0" y2="1"><stop offset="0" stop-color="#7e6c42"/><stop offset="1" stop-color="#c4ae70"/></linearGradient>
</defs>
<!-- blue arrow -->
<path d="M644 494.8h36.8v-16.5l40.6 25.4-40.6 24.1v-15.3H644z" fill="#2a8ad6"/>
<!-- overall silhouette -->
<path d="M714 481L795 444C810 439 835 439 851 449L853 468L858 466C870 462 884 468 886 483L885 530L797 573L793 571L793 552L789 551C775 550 760 546 752 538L734 525L727 528L714 523Z" fill="#e3cb8b"/>
<!-- top face -->
<path d="M714 481L795 444C810 439 835 439 851 449L853 468L858 466C870 462 884 468 886 483L793 523L775 512L745 495L734 483Z" fill="#ead596"/>
<!-- left block -->
<path d="M714 481L727 486V528L714 523Z" fill="#e9d495"/>
<path d="M727 486L734 483V525L727 528Z" fill="#c9b070"/>
<path d="M714 481L720 478L733 475L734 483L727 486Z" fill="#eed99c"/>
<!-- middle front face -->
<path d="M734 483L793 523V552L789 551C775 550 760 546 752 538L734 525Z" fill="#e0c786"/>
<!-- boss around front hole -->
<ellipse cx="768" cy="522" rx="21" ry="25" fill="#e6cf90"/>
<ellipse cx="767.2" cy="522.7" rx="11.6" ry="15.5" fill="#c2aa6a"/>
<ellipse cx="766.2" cy="521.5" rx="9.6" ry="13.5" fill="url(#hole1)"/>
<!-- right block front face -->
<path d="M793 523L886 483L885 530L797 573L793 571Z" fill="#e2ca8a"/>
<path d="M793 523L798 521V572L793 571Z" fill="#d8bf7e"/>
<!-- slots -->
<path d="M746 475.5L808 450" stroke="#f0dca4" stroke-width="12" stroke-linecap="round"/>
<path d="M746 475.5L808 450" stroke="#a48e58" stroke-width="10" stroke-linecap="round"/>
<path d="M746 473L808 447.5" stroke="#6e5c36" stroke-width="5" stroke-linecap="round"/>
<path d="M812 511.5L874 488" stroke="#f0dca4" stroke-width="12" stroke-linecap="round"/>
<path d="M812 511.5L874 488" stroke="#a48e58" stroke-width="10" stroke-linecap="round"/>
<path d="M812 509L874 485.5" stroke="#6e5c36" stroke-width="5" stroke-linecap="round"/>
<!-- top hole -->
<ellipse cx="830.6" cy="469.3" rx="21" ry="12.5" fill="#efdba2"/>
<ellipse cx="830.6" cy="469.3" rx="20" ry="11.8" fill="url(#hole2)"/>
<path d="M810.6 469.3a20 11.8 0 0 1 40 0c-6-5-14-7-20-7s-14 2-20 7z" fill="#7a6840"/>
<!-- subtle mesh lines -->
<g stroke="#c4ac6c" stroke-width=".5" fill="none" opacity=".6">
<path d="M734 483L793 523M760 500L770 470M800 520L884 506M798 560L884 506"/>
</g>
</svg>

<div class="t tip" style="top:606px;font-size:10.3px">Press Ctrl+/ for more help.</div>
</body></html>
